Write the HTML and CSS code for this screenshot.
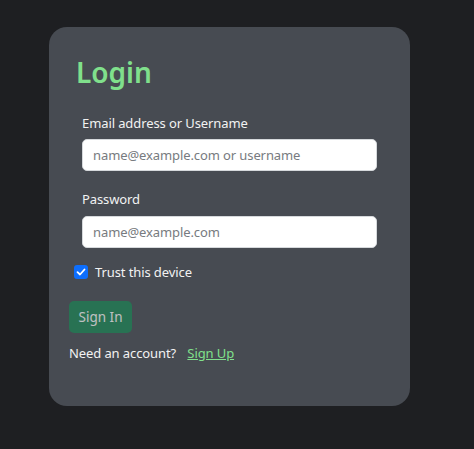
FILE: index.html
```html
<!DOCTYPE html>
<html lang="en">
<head>
<meta charset="utf-8">
<title>Login</title>
<link rel="stylesheet" href="styles.css">
</head>
<body>
<main class="card">
  <h1 class="title">Login</h1>
  <div class="field">
    <label class="label" for="email">Email address or Username</label>
    <input class="input" id="email" type="text" placeholder="name@example.com or username">
  </div>
  <div class="field field-pw">
    <label class="label" for="pw">Password</label>
    <input class="input" id="pw" type="password" placeholder="name@example.com">
  </div>
  <label class="check">
    <span class="box"><svg viewBox="0 0 14 14" width="14" height="14"><path d="M3.5 7.2 L6 9.5 L10.5 4.5" fill="none" stroke="#fff" stroke-width="1.8" stroke-linecap="round" stroke-linejoin="round"/></svg></span>
    <span>Trust this device</span>
  </label>
  <button class="btn" type="button">Sign In</button>
  <p class="foot">Need an account? <a class="link" href="#">Sign Up</a></p>
</main>
</body>
</html>
```

FILE: styles.css
```css
* { box-sizing: border-box; }
html, body { margin: 0; }
body {
  background: #1e1f22;
  width: 474px;
  height: 449px;
  padding: 27px 0 0 49px;
  font-family: "Noto Sans", "Open Sans", sans-serif;
  font-size: 13px;
  letter-spacing: -0.1px;
  color: #f2f2f2;
  overflow: hidden;
}
.card {
  width: 361px;
  height: 379px;
  background: #474b52;
  border-radius: 18px;
  padding: 28px 0 0 0;
  display: flex;
  flex-direction: column;
  align-items: flex-start;
}
.title {
  margin: 0 0 0 27px;
  font-size: 28px;
  line-height: 34px;
  font-weight: 600;
  letter-spacing: 0;
  color: #80e08c;
}
.field {
  margin: 24px 0 0 33px;
  width: 295px;
  display: flex;
  flex-direction: column;
}
.field-pw { margin-top: 18px; }
.label {
  line-height: 20px;
  height: 20px;
}
.input {
  margin-top: 6px;
  height: 32px;
  width: 295px;
  border: 1px solid #d6d9dc;
  border-radius: 5px;
  background: #fff;
  padding: 0 10px;
  font-family: inherit;
  font-size: 13px;
  letter-spacing: -0.1px;
  color: #222;
}
.field-pw .input { margin-top: 7px; }
.input::placeholder { color: #777b80; }
.check {
  margin: 14px 0 0 25px;
  display: flex;
  align-items: center;
  gap: 7px;
  line-height: 20px;
}
.box {
  width: 14px;
  height: 14px;
  border-radius: 3px;
  background: #0d6efd;
  display: flex;
}
.btn {
  margin: 19px 0 0 20px;
  width: 63px;
  height: 32px;
  border: none;
  border-radius: 5px;
  background: #198754;
  opacity: 0.65;
  color: #fff;
  font-family: inherit;
  font-size: 13.5px;
  padding: 0;
}
.foot {
  margin: 10px 0 0 20px;
  line-height: 20px;
}
.link {
  color: #80e08c;
  margin-left: 8px;
}
```
